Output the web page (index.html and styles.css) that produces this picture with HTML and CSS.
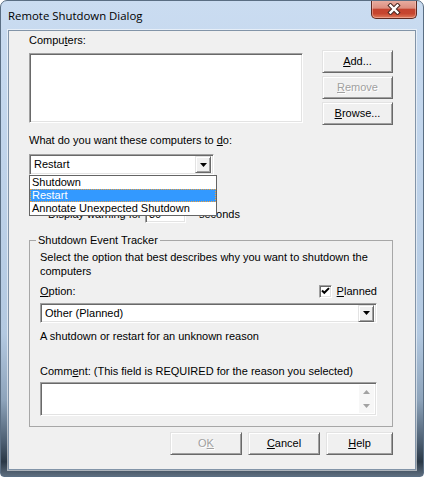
FILE: index.html
```html
<!DOCTYPE html>
<html lang="en">
<head>
  <meta charset="UTF-8"/>
  <title>Remote Shutdown Dialog</title>
  <link rel="stylesheet" href="styles.css">
</head>
<body>
  <div class="window">
    <div class="titlebar">
      <span class="title">Remote Shutdown Dialog</span>
      <div class="close">
        <svg width="14" height="12" viewBox="0 0 14 12">
          <path d="M3.5 2.5 L10.5 9.5 M10.5 2.5 L3.5 9.5" stroke="#4a2a24" stroke-width="4.4" stroke-linecap="square" fill="none"/>
          <path d="M3.5 2.5 L10.5 9.5 M10.5 2.5 L3.5 9.5" stroke="#fff" stroke-width="2.4" stroke-linecap="square" fill="none"/>
        </svg>
      </div>
    </div>

    <div class="client">
      <div class="label">Compu<u>t</u>ers:</div>
      <div class="computers">
        <div class="listbox sunken"></div>
        <div class="side">
          <div class="btn raised"><span><u>A</u>dd...</span></div>
          <div class="btn raised disabled"><span><u>R</u>emove</span></div>
          <div class="btn raised"><span><u>B</u>rowse...</span></div>
        </div>
      </div>

      <div class="label what">What do you want these computers to <u>d</u>o:</div>
      <div class="combo-wrap">
        <div class="combo sunken action">
          <span class="combo-text">Restart</span>
          <span class="drop raised"><svg width="7" height="4" viewBox="0 0 7 4"><polygon points="0,0 7,0 3.5,4" fill="#000"/></svg></span>
        </div>
        <ul class="droplist">
          <li>Shutdown</li>
          <li class="selected">Restart</li>
          <li>Annotate Unexpected Shutdown</li>
        </ul>
      </div>

      <!-- checkbox row sits fully under the open list -->
      <div class="warn"><span class="check sunken"></span></div>
      <div class="delay">
        <span class="delay-label">Display warning for</span>
        <span class="num sunken">30</span>
        <span class="secs">seconds</span>
      </div>

      <fieldset class="group">
        <legend>Shutdown Event Tracker</legend>
        <div class="inner">
          <p class="desc">Select the option that best describes why you want to shutdown the computers</p>
          <div class="option-row">
            <span><u>O</u>ption:</span>
            <span class="planned">
              <span class="check sunken">
                <svg width="9" height="9" viewBox="0 0 9 9"><polyline points="1,3.5 3.3,5.8 8,1.1" stroke="#000" stroke-width="2" fill="none"/></svg>
              </span>
              <span><u>P</u>lanned</span>
            </span>
          </div>
          <div class="combo sunken reason-combo">
            <span class="combo-text">Other (Planned)</span>
            <span class="drop raised"><svg width="7" height="4" viewBox="0 0 7 4"><polygon points="0,0 7,0 3.5,4" fill="#000"/></svg></span>
          </div>
          <div class="label reason">A shutdown or restart for an unknown reason</div>
          <div class="label comment-label">Comm<u>e</u>nt: (This field is REQUIRED for the reason you selected)</div>
          <div class="comment sunken">
            <div class="vscroll">
              <svg width="7" height="4" viewBox="0 0 7 4"><polygon points="0,4 7,4 3.5,0" fill="#a3a3a3"/></svg>
              <svg width="7" height="4" viewBox="0 0 7 4"><polygon points="0,0 7,0 3.5,4" fill="#a3a3a3"/></svg>
            </div>
          </div>
        </div>
      </fieldset>

      <div class="footer">
        <div class="btn raised disabled"><span>O<u>K</u></span></div>
        <div class="btn raised"><span><u>C</u>ancel</span></div>
        <div class="btn raised help"><span><u>H</u>elp</span></div>
      </div>
    </div>
  </div>
</body>
</html>
```

FILE: styles.css
```css
body { margin:0; background:#fff; font-family:"Liberation Sans", Arial, sans-serif; font-size:11px; color:#000; }

.window { width:424px; height:477px; box-sizing:border-box; border:1px solid #5a6e83; border-radius:7px 7px 4px 4px; overflow:hidden; display:flex; flex-direction:column;
  background:linear-gradient(to bottom, #cadcf1 0%, #bfd3ea 35%, #b3c9e1 70%, #8ea4bb 84%, #4b5d70 93%, #2a3846 97%, #5d6d7e 100%); }

.titlebar { height:29px; flex:none; display:flex; align-items:flex-start; }
.title { font-family:"Open Sans", "Liberation Sans", sans-serif; font-size:11.4px; line-height:16px; padding:7px 0 0 7px; color:#000; }
.close { margin:-1px 6px 0 auto; width:46px; height:19px; box-sizing:border-box; border:1px solid #5e2a22; border-top:none; border-radius:0 0 5px 5px;
  display:flex; align-items:center; justify-content:center;
  background:linear-gradient(to bottom, #e9b0a4 0%, #dc8e7f 45%, #c4432f 52%, #c6452f 75%, #df7a5b 100%);
  box-shadow:inset 0 0 0 1px rgba(255,210,200,0.45); }

.client { margin:0 7px; height:440px; box-sizing:border-box; border:1px solid #8294a8; background:#f0f0f0; padding:3px 22px 0 20px;
  box-shadow:0 0 0 1px rgba(255,255,255,0.55); }

.label { line-height:13px; }

.sunken { background:#fff; border:1px solid; border-color:#a0a0a0 #fff #fff #a0a0a0; box-shadow:inset 1px 1px #696969, inset -1px -1px #e3e3e3; box-sizing:border-box; }
.raised { background:#f0f0f0; border:1px solid; border-color:#e3e3e3 #696969 #696969 #e3e3e3; box-shadow:inset 1px 1px #fff, inset -1px -1px #a0a0a0; box-sizing:border-box; }

.computers { display:flex; justify-content:space-between; margin-top:3px; }
.listbox { width:274px; height:70px; margin-top:3px; }
.side { display:flex; flex-direction:column; gap:3px; }

.btn { width:71px; height:23px; display:flex; align-items:center; justify-content:center; line-height:13px; }
.btn.disabled { color:#a0a0a0; text-shadow:1px 1px 0 #fff; }

.what { margin-top:9px; }
.combo-wrap { position:relative; margin-top:7px; }
.combo { display:flex; align-items:center; height:21px; padding:2px; }
.combo.action { width:185px; }
.combo-text { padding-left:2px; line-height:13px; }
.drop { margin-left:auto; width:16px; height:17px; display:flex; align-items:center; justify-content:center; }
.drop svg { display:block; }

.droplist { position:absolute; left:0; top:21px; width:186px; margin:0; padding:0; list-style:none; background:#fff; border:1px solid #646464; z-index:2; }
.droplist li { height:13px; line-height:13px; padding-left:2px; }
.droplist li.selected { background:#3399ff; color:#fff; outline:1px dotted #f2a23c; outline-offset:-1px; }

.warn { display:flex; align-items:center; height:13px; margin-top:6px; }
.check { width:13px; height:13px; display:flex; align-items:center; justify-content:center; }
.check svg { display:block; }

.delay { display:flex; align-items:center; height:17px; margin-top:12px; padding-left:19px; line-height:13px; }
.delay-label { width:97px; }
.num { width:41px; height:17px; padding:1px 3px; line-height:13px; }
.secs { margin-left:13px; }

.group { margin:11px 0 0; padding:0 10px 10px; border:1px solid #a7a7a7; min-width:0; }
.group legend { padding:0 2px; margin-left:-4px; line-height:13px; }
.inner { width:337px; }
.desc { margin:3px 0 0; line-height:14px; }

.option-row { display:flex; justify-content:space-between; align-items:center; height:13px; margin-top:7px; line-height:13px; }
.planned { display:flex; align-items:center; gap:5px; }

.reason-combo { margin-top:5px; height:20px; }
.reason { margin-top:7px; }
.comment-label { margin-top:22px; }
.comment { margin-top:4px; height:34px; padding:2px; display:flex; justify-content:flex-end; }
.vscroll { width:15px; background:#f7f7f7; display:flex; flex-direction:column; justify-content:space-between; align-items:center; padding:5px 0; box-sizing:border-box; }

.footer { display:flex; justify-content:flex-end; gap:6px; margin-top:5px; }
.footer .btn { width:72px; }
.footer .btn.help { width:67px; }
```
